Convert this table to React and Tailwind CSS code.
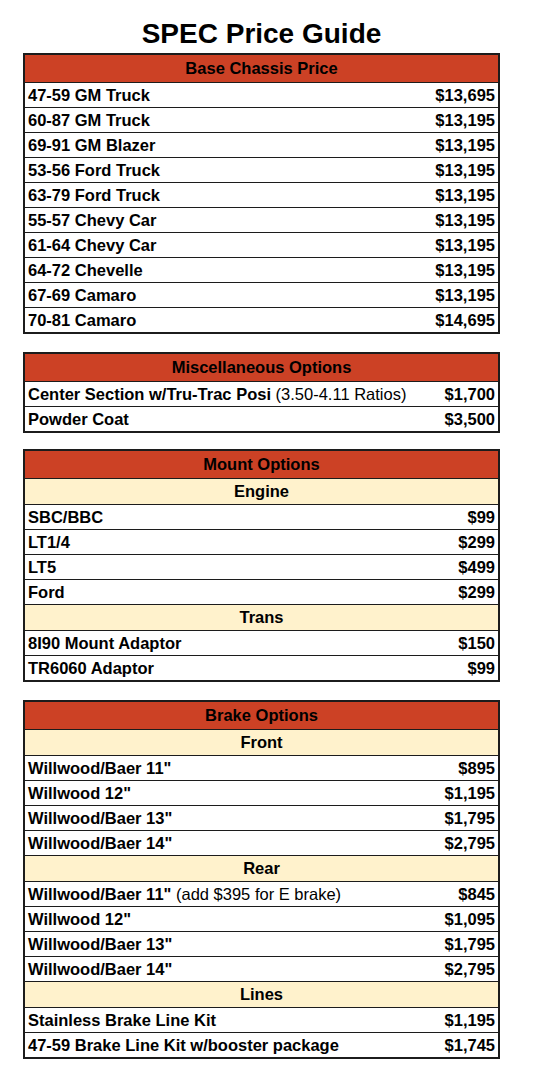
import React from 'react';

const sections = [
    {
        title: 'Base Chassis Price',
        gap: 'mt-0',
        groups: [
            {
                rows: [
                    ['47-59 GM Truck', '$13,695'],
                    ['60-87 GM Truck', '$13,195'],
                    ['69-91 GM Blazer', '$13,195'],
                    ['53-56 Ford Truck', '$13,195'],
                    ['63-79 Ford Truck', '$13,195'],
                    ['55-57 Chevy Car', '$13,195'],
                    ['61-64 Chevy Car', '$13,195'],
                    ['64-72 Chevelle', '$13,195'],
                    ['67-69 Camaro', '$13,195'],
                    ['70-81 Camaro', '$14,695'],
                ],
            },
        ],
    },
    {
        title: 'Miscellaneous Options',
        gap: 'mt-[18px]',
        groups: [
            {
                rows: [
                    ['Center Section w/Tru-Trac Posi', '$1,700', '(3.50-4.11 Ratios)'],
                    ['Powder Coat', '$3,500'],
                ],
            },
        ],
    },
    {
        title: 'Mount Options',
        gap: 'mt-[16px]',
        groups: [
            {
                label: 'Engine',
                rows: [
                    ['SBC/BBC', '$99'],
                    ['LT1/4', '$299'],
                    ['LT5', '$499'],
                    ['Ford', '$299'],
                ],
            },
            {
                label: 'Trans',
                rows: [
                    ['8I90 Mount Adaptor', '$150'],
                    ['TR6060 Adaptor', '$99'],
                ],
            },
        ],
    },
    {
        title: 'Brake Options',
        gap: 'mt-[18px]',
        groups: [
            {
                label: 'Front',
                rows: [
                    ['Willwood/Baer 11"', '$895'],
                    ['Willwood 12"', '$1,195'],
                    ['Willwood/Baer 13"', '$1,795'],
                    ['Willwood/Baer 14"', '$2,795'],
                ],
            },
            {
                label: 'Rear',
                rows: [
                    ['Willwood/Baer 11"', '$845', '(add $395 for E brake)'],
                    ['Willwood 12"', '$1,095'],
                    ['Willwood/Baer 13"', '$1,795'],
                    ['Willwood/Baer 14"', '$2,795'],
                ],
            },
            {
                label: 'Lines',
                rows: [
                    ['Stainless Brake Line Kit', '$1,195'],
                    ['47-59 Brake Line Kit w/booster package', '$1,745'],
                ],
            },
        ],
    },
];

const PriceTable = ({ section }) => (
    <div className={`${section.gap} border-2 border-[#1c1c1c]`}>
        <div className="h-[27px] bg-[#cc4125] flex items-center justify-center font-bold text-[16.5px]">
            {section.title}
        </div>
        {section.groups.map((g, gi) => (
            <React.Fragment key={gi}>
                {g.label && (
                    <div className="h-[26px] border-t border-[#1c1c1c] bg-[#fff2cc] flex items-center justify-center font-bold text-[16.5px]">
                        {g.label}
                    </div>
                )}
                {g.rows.map(([name, price, note], ri) => (
                    <div
                        key={ri}
                        className="h-[25px] border-t border-[#1c1c1c] bg-white flex items-center justify-between px-[3px] text-[16.5px]"
                    >
                        <span className="font-bold">
                            {name}
                            {note && <span className="font-normal"> {note}</span>}
                        </span>
                        <span className="font-bold">{price}</span>
                    </div>
                ))}
            </React.Fragment>
        ))}
    </div>
);

export default function App() {
    return (
        <div className="w-[550px] min-h-[1087px] bg-white text-black font-['Liberation_Sans',Arial,sans-serif]">
            <div className="w-[477px] ml-[23px] pt-[17px]">
                <h1 className="text-center font-bold text-[28px] leading-[34px] mb-[2px]">SPEC Price Guide</h1>
                {sections.map((s) => (
                    <PriceTable key={s.title} section={s} />
                ))}
            </div>
        </div>
    );
}
